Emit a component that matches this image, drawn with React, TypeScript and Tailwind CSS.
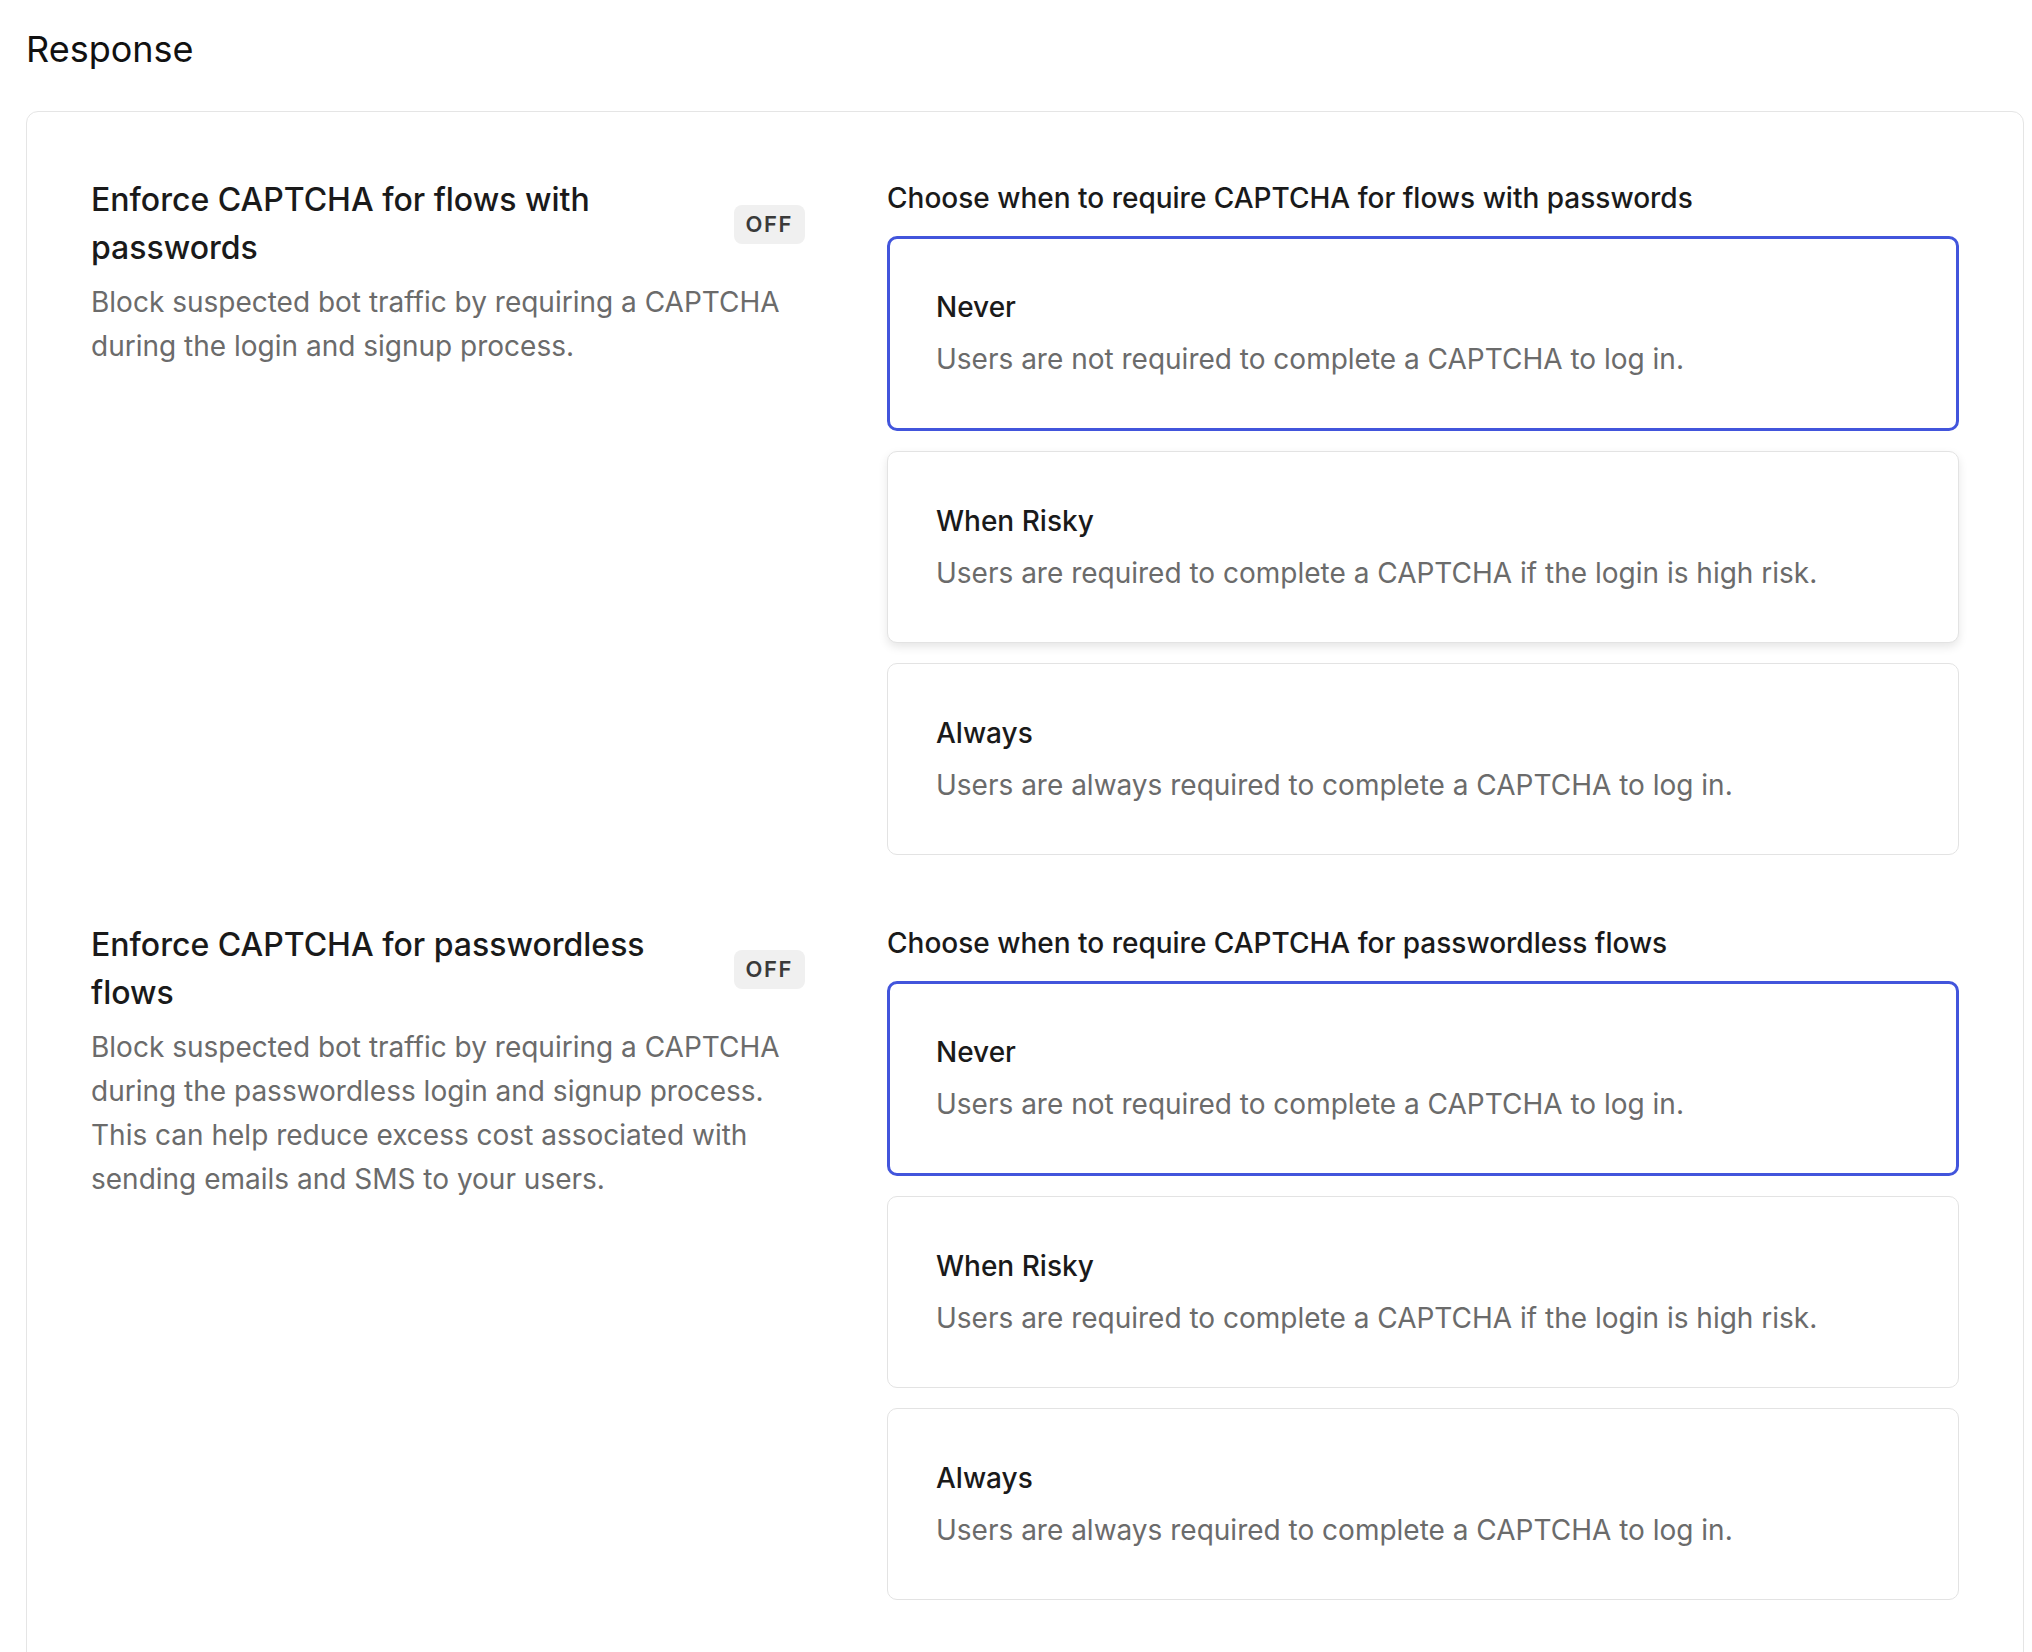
import React from 'react';

type Option = { title: string; description: string };

const options: Option[] = [
  { title: 'Never', description: 'Users are not required to complete a CAPTCHA to log in.' },
  { title: 'When Risky', description: 'Users are required to complete a CAPTCHA if the login is high risk.' },
  { title: 'Always', description: 'Users are always required to complete a CAPTCHA to log in.' },
];

function OptionCard({ option, selected, raised }: { option: Option; selected?: boolean; raised?: boolean }) {
  return (
    <div
      className={`rounded-[10px] bg-white ${
        selected
          ? 'border-[3px] border-[#4255dc] px-[46px] pt-[46px] pb-[47px]'
          : 'border border-[#e3e3e3] px-[48px] py-[47px]'
      } ${raised ? 'shadow-[0_4px_10px_rgba(0,0,0,0.10)]' : ''}`}
    >
      <div className="text-[28px] leading-[44px] font-medium text-[#1a1a1a]">{option.title}</div>
      <div className="mt-2 text-[28px] leading-[44px] text-[#6b6b6b]">{option.description}</div>
    </div>
  );
}

function Section({
  title,
  description,
  chooseLabel,
  raisedIndex,
}: {
  title: string;
  description: string;
  chooseLabel: string;
  raisedIndex?: number;
}) {
  return (
    <div className="grid grid-cols-[714px_1fr] gap-[82px]">
      <div>
        <div className="flex items-center justify-between">
          <h3 className="max-w-[600px] text-[32px] leading-[48px] font-medium text-[#1a1a1a]">{title}</h3>
          <span className="rounded-[8px] bg-[#f0f0f0] px-[12px] py-[4px] text-[22px] leading-[31px] font-semibold tracking-[0.07em] text-[#3a3a3a]">
            OFF
          </span>
        </div>
        <p className="mt-2 text-[28px] leading-[44px] text-[#6b6b6b]">{description}</p>
      </div>
      <div>
        <div className="text-[28px] leading-[44px] font-medium text-[#1a1a1a]">{chooseLabel}</div>
        <div className="mt-[16px] flex flex-col gap-[20px]">
          {options.map((o, i) => (
            <OptionCard key={o.title} option={o} selected={i === 0} raised={i === raisedIndex} />
          ))}
        </div>
      </div>
    </div>
  );
}

export default function App() {
  return (
    <div className="min-h-screen bg-white pl-[26px] pr-[8px] pt-[25px] font-['Inter',sans-serif]">
      <h2 className="text-[36px] leading-[48px] font-normal text-[#111]">Response</h2>
      <div className="mt-[38px] rounded-[12px] border border-[#e5e5e5] px-[64px] pt-[64px] pb-[64px] flex flex-col gap-[66px]">
        <Section
          title="Enforce CAPTCHA for flows with passwords"
          description="Block suspected bot traffic by requiring a CAPTCHA during the login and signup process."
          chooseLabel="Choose when to require CAPTCHA for flows with passwords"
          raisedIndex={1}
        />
        <Section
          title="Enforce CAPTCHA for passwordless flows"
          description="Block suspected bot traffic by requiring a CAPTCHA during the passwordless login and signup process. This can help reduce excess cost associated with sending emails and SMS to your users."
          chooseLabel="Choose when to require CAPTCHA for passwordless flows"
        />
      </div>
    </div>
  );
}
